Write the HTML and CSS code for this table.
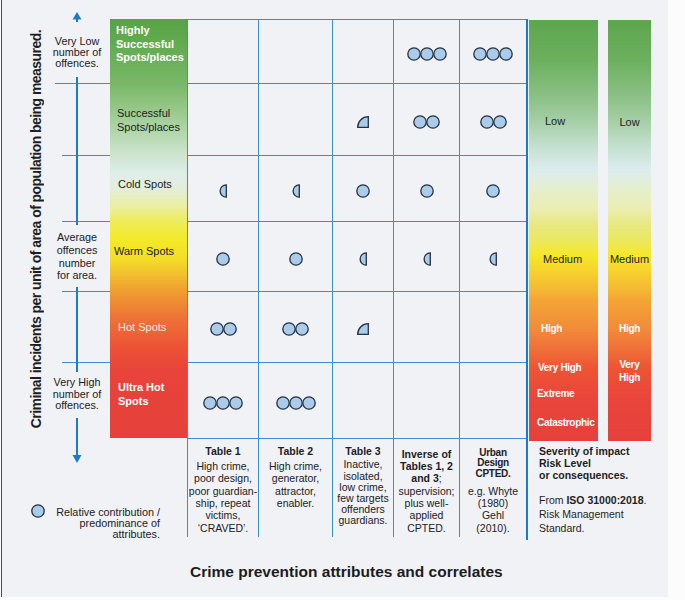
FILE: index.html
```html
<!DOCTYPE html>
<html lang="en">
<head>
<meta charset="utf-8">
<title>Crime prevention attributes and correlates</title>
<link rel="stylesheet" href="styles.css">
</head>
<body>
<svg class="defs" width="0" height="0" aria-hidden="true">
  <defs>
    <symbol id="c1" viewBox="0 0 14 14"><circle cx="7" cy="7" r="6.2"/></symbol>
    <symbol id="c2" viewBox="0 0 27 14"><circle cx="7" cy="7" r="6.2"/><circle cx="20" cy="7" r="6.2"/></symbol>
    <symbol id="c3" viewBox="0 0 40 14"><circle cx="7" cy="7" r="6.2"/><circle cx="20" cy="7" r="6.2"/><circle cx="33" cy="7" r="6.2"/></symbol>
    <symbol id="half" viewBox="0 0 8 14"><path d="M7.3 0.8 A6.2 6.2 0 0 0 7.3 13.2 Z"/></symbol>
    <symbol id="quarter" viewBox="0 0 12 12"><path d="M11.3 11.3 H0.7 A10.6 10.6 0 0 1 11.3 0.7 Z"/></symbol>
  </defs>
</svg>
<div class="page">
  <div class="axis"><span class="axis-text">Criminal incidents per unit of area of population being measured.</span></div>

  <div class="rules">
    <i></i><i class="rule rule-full"></i><i class="rule"></i><i class="rule"></i><i class="rule"></i><i class="rule"></i>
  </div>

  <div class="arrow">
    <svg class="head" width="10" height="10" viewBox="0 0 10 10"><path d="M5 0 L9.5 7.6 L6 7.6 L6 10 L4 10 L4 7.6 L0.5 7.6 Z"/></svg>
    <p class="arrow-label lab-low">Very Low<br>number of<br>offences.</p>
    <span class="shaft shaft-1"></span>
    <p class="arrow-label lab-avg">Average<br>offences<br>number<br>for area.</p>
    <span class="shaft shaft-2"></span>
    <p class="arrow-label lab-high">Very High<br>number of<br>offences.</p>
    <span class="shaft shaft-3"></span>
    <svg class="head" width="10" height="8" viewBox="0 0 10 8"><path d="M0.5 0 L9.5 0 L5 8 Z"/></svg>
  </div>

  <div class="scale">
    <div class="zone zone-top">Highly<br>Successful<br>Spots/places</div>
    <div class="zone zone-2">Successful<br>Spots/places</div>
    <div class="zone zone-3">Cold Spots</div>
    <div class="zone zone-4">Warm Spots</div>
    <div class="zone zone-5">Hot Spots</div>
    <div class="zone zone-6">Ultra Hot<br>Spots</div>
  </div>

  <div class="table">
    <div class="cell"></div>
    <div class="cell"></div>
    <div class="cell"></div>
    <div class="cell"><svg class="sym w3"><use href="#c3"/></svg></div>
    <div class="cell"><svg class="sym w3"><use href="#c3"/></svg></div>

    <div class="cell"></div>
    <div class="cell"></div>
    <div class="cell"><svg class="sym wq"><use href="#quarter"/></svg></div>
    <div class="cell"><svg class="sym w2"><use href="#c2"/></svg></div>
    <div class="cell"><svg class="sym w2"><use href="#c2"/></svg></div>

    <div class="cell"><svg class="sym wh"><use href="#half"/></svg></div>
    <div class="cell"><svg class="sym wh"><use href="#half"/></svg></div>
    <div class="cell"><svg class="sym w1"><use href="#c1"/></svg></div>
    <div class="cell"><svg class="sym w1"><use href="#c1"/></svg></div>
    <div class="cell"><svg class="sym w1"><use href="#c1"/></svg></div>

    <div class="cell"><svg class="sym w1"><use href="#c1"/></svg></div>
    <div class="cell"><svg class="sym w1"><use href="#c1"/></svg></div>
    <div class="cell"><svg class="sym wh"><use href="#half"/></svg></div>
    <div class="cell"><svg class="sym wh"><use href="#half"/></svg></div>
    <div class="cell"><svg class="sym wh"><use href="#half"/></svg></div>

    <div class="cell"><svg class="sym w2"><use href="#c2"/></svg></div>
    <div class="cell"><svg class="sym w2"><use href="#c2"/></svg></div>
    <div class="cell"><svg class="sym wq"><use href="#quarter"/></svg></div>
    <div class="cell"></div>
    <div class="cell"></div>

    <div class="cell"><svg class="sym w3"><use href="#c3"/></svg></div>
    <div class="cell"><svg class="sym w3"><use href="#c3"/></svg></div>
    <div class="cell"></div>
    <div class="cell"></div>
    <div class="cell"></div>

    <div class="cell note">
      <div class="nh">Table 1</div>
      <div class="nb">High crime,<br>poor design,<br>poor guardian-<br>ship, repeat<br>victims,<br>‘CRAVED’.</div>
    </div>
    <div class="cell note">
      <div class="nh">Table 2</div>
      <div class="nb">High crime,<br>generator,<br>attractor,<br>enabler.</div>
    </div>
    <div class="cell note">
      <div class="nh">Table 3</div>
      <div class="nb nb-tight">Inactive,<br>isolated,<br>low crime,<br>few targets<br>offenders<br>guardians.</div>
    </div>
    <div class="cell note note-inv">
      <div class="nb"><b>Inverse of<br>Tables 1, 2<br>and 3</b>;<br>supervision;<br>plus well-<br>applied<br>CPTED.</div>
    </div>
    <div class="cell note note-urban">
      <div class="nh-narrow">Urban<br>Design<br>CPTED.</div>
      <div class="nb nb-urban">e.g. Whyte<br>(1980)<br>Gehl<br>(2010).</div>
    </div>
  </div>

  <div class="edge"></div>

  <div class="risk">
    <div class="bars">
      <div class="bar bar-wide">
        <span class="lv lv-dark lv-low">Low</span>
        <span class="lv lv-dark lv-med">Medium</span>
        <span class="lv lv-light lv-high">High</span>
        <span class="lv lv-light lv-vhigh">Very High</span>
        <span class="lv lv-light lv-ext">Extreme</span>
        <span class="lv lv-light lv-cat">Catastrophic</span>
      </div>
      <div class="bar bar-narrow">
        <span class="lv lv-dark lv-low2">Low</span>
        <span class="lv lv-dark lv-med2">Medium</span>
        <span class="lv lv-light lv-high2">High</span>
        <span class="lv lv-light lv-vhigh2">Very<br>High</span>
      </div>
    </div>
    <div class="risk-notes">
      <p class="sev">Severity of impact<br>Risk Level<br>or consequences.</p>
      <p class="src">From <b>ISO 31000:2018</b>.<br>Risk Management<br>Standard.</p>
    </div>
  </div>

  <div class="legend">
    <svg class="sym legend-dot"><use href="#c1"/></svg>
    <p class="legend-text">Relative contribution /<br>predominance of<br>attributes.</p>
  </div>

  <div class="title">Crime prevention attributes and correlates</div>
</div>
</body>
</html>
```
FILE: styles.css
```css
:root {
  --line: #3a8ed2;
  --arrow: #1f7bc6;
  --ink: #1d1e22;
}

body {
  margin: 0;
  background: #fcfcfd;
  font-family: "Liberation Sans", Arial, sans-serif;
  color: var(--ink);
}

.defs {
  position: absolute;
  width: 0;
  height: 0;
  overflow: hidden;
}

.page {
  margin-left: 1px;
  width: 666px;
  height: 597px;
  border-left: 1px solid #4d4d4d;
  background: #f1f2f6;
  display: grid;
  grid-template-columns: 53px 55px 77px 339px 2px 1fr;
  grid-template-rows: 19px 419px 99px 1fr;
}

/* vertical axis title */
.axis {
  grid-column: 1;
  grid-row: 1 / 4;
  display: flex;
  align-items: center;
  justify-content: center;
  padding: 0 0 78px 15px;
}

.axis-text {
  writing-mode: vertical-rl;
  transform: rotate(180deg);
  white-space: nowrap;
  font-weight: 700;
  font-size: 14px;
  letter-spacing: -0.55px;
  line-height: 16px;
}

/* horizontal rules crossing the arrow column */
.rules {
  grid-column: 2;
  grid-row: 2;
  display: grid;
  grid-template-rows: 64px 72px 66px 70px 71px 76px;
}

.rule {
  border-top: 1px solid var(--line);
  margin-left: 7px;
}

.rule-full {
  margin-left: 0;
}

/* arrow with labels */
.arrow {
  grid-column: 2;
  grid-row: 1 / 4;
  display: flex;
  flex-direction: column;
  align-items: center;
  padding: 12px 11px 0 0;
}

.head {
  display: block;
  flex: none;
  fill: var(--arrow);
}

.shaft {
  display: block;
  flex: none;
  width: 2px;
  background: var(--arrow);
}

.arrow-label {
  margin: 0;
  font-size: 10.8px;
  line-height: 11px;
  text-align: center;
  white-space: nowrap;
  color: #202124;
}

.lab-low { margin-top: 14px; }
.shaft-1 { margin-top: 8px; height: 148px; }
.lab-avg { margin-top: 6px; line-height: 12.8px; }
.shaft-2 { margin-top: 5px; height: 85px; }
.lab-high { margin-top: 5px; line-height: 11.5px; }
.shaft-3 { margin-top: 6px; height: 37px; }

/* colour scale column */
.scale {
  grid-column: 3;
  grid-row: 2;
  display: grid;
  grid-template-rows: 64px 72px 66px 70px 71px 76px;
  background: linear-gradient(to bottom,
    #56a344 0px,
    #78b766 64px,
    #a3cf98 101px,
    #c8e2c8 131px,
    #dfeeea 155px,
    #e4eed6 171px,
    #ecefa0 188px,
    #eeec5a 202px,
    #f3ea28 220px,
    #f4de28 240px,
    #f2c02e 255px,
    #efa030 271px,
    #ee7038 301px,
    #ec5035 331px,
    #e8443a 350px,
    #e6403a 419px);
}

.zone {
  display: flex;
  flex-direction: column;
  justify-content: center;
  padding-left: 7px;
  font-size: 11px;
  line-height: 14px;
  white-space: nowrap;
  color: #202124;
}

.zone-top {
  justify-content: flex-start;
  padding-top: 5px;
  padding-left: 6px;
  line-height: 13.5px;
  color: #fff;
  font-weight: 700;
}

.zone-2 { padding-top: 2px; }
.zone-3 { padding-bottom: 8px; padding-left: 8px; }
.zone-4 { padding-bottom: 10px; padding-left: 4px; }
.zone-5 { color: #fbe9e2; padding-left: 8px; }
.zone-6 { padding-bottom: 12px; padding-left: 8px; color: #fff; font-weight: 700; }

/* data table */
.table {
  grid-column: 4;
  grid-row: 2 / 4;
  display: grid;
  grid-template-columns: 71px 74px 61px 66px 67px;
  grid-template-rows: 64px 72px 66px 70px 71px 76px 99px;
}

.cell {
  border-top: 1px solid var(--line);
  border-left: 1px solid var(--line);
  display: flex;
  align-items: center;
  justify-content: center;
  padding-top: 4px;
}

.sym {
  display: block;
  height: 14px;
  fill: #aacbea;
  stroke: #24313f;
  stroke-width: 1.3;
}

.w1 { width: 14px; }
.w2 { width: 27px; }
.w3 { width: 40px; }
.wh { width: 8px; }
.wq { width: 12px; height: 12px; }

.note {
  display: block;
  padding-top: 5.8px;
  text-align: center;
  font-size: 10.5px;
  line-height: 12.4px;
  white-space: nowrap;
  color: #202124;
}

.nh {
  font-weight: 700;
}

.nb {
  margin-top: 2.6px;
}

.nb-tight {
  margin-top: 2.2px;
  line-height: 11.2px;
}

.note-inv {
  padding-top: 8.8px;
  line-height: 12.3px;
}

.note-inv .nb {
  margin-top: 0;
}

.note-urban {
  padding-top: 8.7px;
}

.nh-narrow {
  font-weight: 700;
  font-size: 10px;
  line-height: 10.5px;
  letter-spacing: -0.3px;
}

.nb-urban {
  margin-top: 5.6px;
  line-height: 12.3px;
}

.edge {
  grid-column: 5;
  grid-row: 2 / 4;
  margin-bottom: -3px;
  background: #1a7bc8;
}

/* risk bars */
.risk {
  grid-column: 6;
  grid-row: 2 / 4;
  display: flex;
  flex-direction: column;
  padding: 1px 0 0 1px;
}

.bars {
  display: flex;
  gap: 10px;
  height: 421px;
}

.bar {
  display: flex;
  flex-direction: column;
  font-size: 11px;
  line-height: 12px;
  white-space: nowrap;
  background: linear-gradient(to bottom,
    #5ca64d 0px,
    #6cb05e 40px,
    #8fc28a 80px,
    #a5cfa5 101px,
    #c8e2d4 130px,
    #dcecee 150px,
    #e6efcc 170px,
    #ecedb0 190px,
    #e8e880 205px,
    #ebe860 220px,
    #f5e82a 235px,
    #f7d42c 250px,
    #f5b834 270px,
    #f4a535 280px,
    #f18a3a 310px,
    #ef6e38 330px,
    #ed5534 348px,
    #ea463a 375px,
    #e6403c 421px);
}

.bar-wide { width: 69px; }
.bar-narrow { width: 43px; align-items: center; text-align: center; }

.lv { display: block; }
.lv-dark { color: #202124; }
.lv-light { color: #fff; font-weight: 700; font-size: 10px; letter-spacing: -0.3px; }

.lv-low { margin-top: 95px; padding-left: 16px; }
.lv-med { margin-top: 126px; padding-left: 14px; }
.lv-high { margin-top: 58px; padding-left: 12px; }
.lv-vhigh { margin-top: 27px; padding-left: 9px; }
.lv-ext { margin-top: 14px; padding-left: 8px; }
.lv-cat { margin-top: 17px; padding-left: 8px; }

.lv-low2 { margin-top: 96px; }
.lv-med2 { margin-top: 125px; }
.lv-high2 { margin-top: 58px; }
.lv-vhigh2 { margin-top: 22.5px; line-height: 13px; }

.risk-notes {
  margin-top: 4px;
  padding-left: 10px;
  font-size: 10.5px;
  color: #1d1e22;
}

.sev {
  margin: 0;
  font-weight: 700;
  line-height: 12px;
}

.src {
  margin: 12px 0 0;
  line-height: 14px;
}

/* legend */
.legend {
  grid-column: 1 / 4;
  grid-row: 3;
  display: flex;
  align-items: flex-start;
  padding-top: 66px;
}

.legend-dot {
  width: 14px;
  margin-left: 29px;
}

.legend-text {
  margin: 2.5px 27px 0 auto;
  text-align: right;
  font-size: 10.8px;
  line-height: 11px;
  white-space: nowrap;
  color: #202124;
}

/* bottom title */
.title {
  grid-column: 4 / 7;
  grid-row: 4;
  padding: 26px 0 0 3px;
  font-weight: 700;
  font-size: 15.5px;
  line-height: 18px;
  white-space: nowrap;
  color: #1c1c1e;
}
```
